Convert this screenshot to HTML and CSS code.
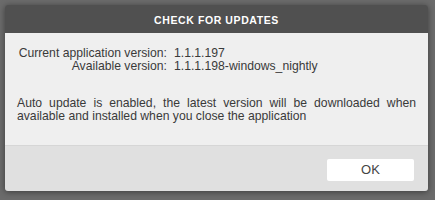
FILE: index.html
```html
<!DOCTYPE html>
<html lang="en">

<head>
    <meta charset="UTF-8">
    <title>Check for Updates</title>
    <link rel="stylesheet" href="styles.css">
</head>

<body>
    <div class="dialog">
        <div class="dialog-title">CHECK FOR UPDATES</div>

        <div class="dialog-body">
            <div class="versions">
                <span class="label">Current application version:</span>
                <span class="value">1.1.1.197</span>
                <span class="label">Available version:</span>
                <span class="value">1.1.1.198-windows_nightly</span>
            </div>
            <p class="note">Auto update is enabled, the latest version will be downloaded when available and installed when you close the application</p>
        </div>

        <div class="dialog-footer">
            <button class="btn-ok">OK</button>
        </div>
    </div>
</body>

</html>
```

FILE: styles.css
```css
html,
body {
    margin: 0;
    height: 100%;
}

body {
    background-color: #6b6b6b;
    font-family: "Liberation Sans", Arial, sans-serif;
    padding: 5px 7px 0 5px;
    box-sizing: border-box;
}

.dialog {
    width: 423px;
    border-radius: 3px;
    overflow: hidden;
    box-shadow: 0 1px 6px rgba(0, 0, 0, 0.45);
}

.dialog-title {
    height: 28px;
    line-height: 30px;
    background-color: #505050;
    color: #fff;
    text-align: center;
    font-weight: bold;
    font-size: 10.5px;
    letter-spacing: 0.6px;
}

.dialog-body {
    background-color: #efefef;
    padding: 14px 12px 0 12px;
    height: 98px;
    border-bottom: 1px solid #d6d6d6;
    color: #3a3a3a;
    font-size: 12.2px;
}

.versions {
    display: grid;
    grid-template-columns: 150px auto;
    column-gap: 7px;
    line-height: 13px;
}

.versions .label {
    text-align: right;
    white-space: nowrap;
}

.note {
    margin: 24px 0 0 0;
    line-height: 13px;
    text-align: justify;
}

.dialog-footer {
    background-color: #e0e0e0;
    height: 45px;
    display: flex;
    justify-content: flex-end;
    align-items: center;
    padding-right: 14px;
}

.btn-ok {
    width: 87px;
    height: 22px;
    margin-top: 2px;
    border: none;
    border-radius: 2px;
    background-color: #fff;
    color: #444;
    font-family: "Liberation Sans", Arial, sans-serif;
    font-size: 13px;
    cursor: pointer;
}
```
